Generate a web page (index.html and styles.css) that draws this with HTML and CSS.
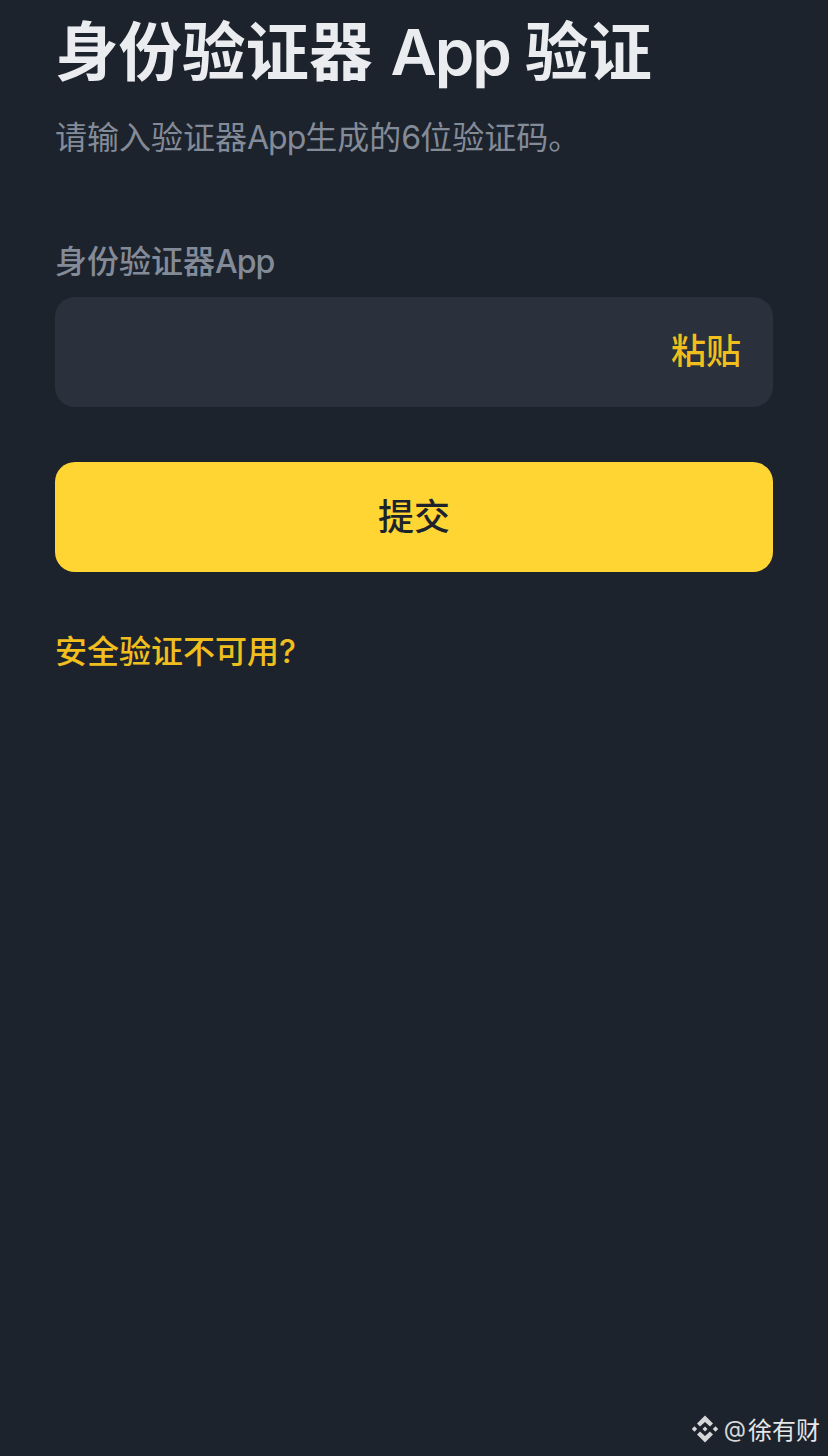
FILE: index.html
```html
<!DOCTYPE html>
<html lang="zh-CN">
<head>
    <meta charset="UTF-8">
    <meta name="viewport" content="width=device-width, initial-scale=1.0">
    <title>身份验证器 App 验证</title>
    <link rel="stylesheet" href="styles.css">
</head>
<body>
    <main class="page">
        <h1 class="title">身份验证器 <span class="title-latin">App</span> 验证</h1>
        <p class="subtitle">请输入验证器<span class="latin">App</span>生成的<span class="latin">6</span>位验证码。</p>
        <div class="label">身份验证器<span class="latin">App</span></div>
        <div class="field">
            <span class="paste">粘贴</span>
        </div>
        <button class="submit">提交</button>
        <a class="help-link">安全验证不可用?</a>
    </main>
    <div class="watermark">
        <svg class="watermark-logo" viewBox="0 0 28 28" width="28" height="28">
            <path fill="#d6d7d9" d="M14 11.500 16.500 14 14 16.500 11.500 14Z"/>
            <path fill="#d6d7d9" d="M14 .5 22 8.500 19 11.500 14 7 9 11.500 6 8.500Z"/>
            <path fill="#d6d7d9" d="M14 27.500 6 19.500 9 16.500 14 21 19 16.500 22 19.500Z"/>
            <path fill="#d6d7d9" d="M3.500 11.300 6.200 14 3.500 16.700 .8 14Z"/>
            <path fill="#d6d7d9" d="M24.500 11.300 27.200 14 24.500 16.700 21.800 14Z"/>
        </svg>
        <span class="watermark-at">@</span>
        <span class="watermark-name">徐有财</span>
    </div>
</body>
</html>
```

FILE: styles.css
```css
html, body {
    height: 100%;
}

body {
    margin: 0;
    background-color: #1d232c;
    font-family: Inter, "Noto Sans CJK SC", sans-serif;
    overflow: hidden;
    position: relative;
}

.page {
    display: flex;
    flex-direction: column;
    padding: 0 55px;
}

.title {
    margin: 14px 0 0;
    font-size: 63.5px;
    line-height: 76px;
    font-weight: 700;
    color: #eaecef;
}

.title-latin {
    margin-left: 3px;
    font-weight: 600;
    letter-spacing: -2px;
}

.subtitle {
    margin: 28px 0 0;
    font-size: 32px;
    line-height: 40px;
    color: #848b98;
}

.latin {
    letter-spacing: -1px;
}

.label {
    margin-top: 84px;
    font-size: 32px;
    line-height: 40px;
    font-weight: 500;
    color: #848b98;
}

.field {
    margin-top: 15px;
    height: 110px;
    border-radius: 20px;
    background-color: #2a303c;
    display: flex;
    align-items: center;
    justify-content: flex-end;
    padding: 0 32px 8px 0;
    box-sizing: border-box;
}

.paste {
    font-size: 35px;
    font-weight: 500;
    color: #f0bf1e;
}

.submit {
    margin-top: 55px;
    height: 110px;
    padding: 0 0 6px;
    border: none;
    border-radius: 20px;
    background-color: #fed533;
    color: #1d232c;
    font-family: inherit;
    font-size: 36px;
    font-weight: 500;
}

.help-link {
    margin-top: 60px;
    font-size: 32px;
    line-height: 40px;
    font-weight: 500;
    color: #f0bf1e;
}

.watermark {
    position: absolute;
    right: 8px;
    bottom: 10px;
    display: flex;
    align-items: center;
    gap: 5px;
    color: #e6e7e8;
}

.watermark-at {
    margin-right: -3px;
    font-size: 23px;
    color: #d6d7d9;
}

.watermark-name {
    font-size: 24px;
}
```
